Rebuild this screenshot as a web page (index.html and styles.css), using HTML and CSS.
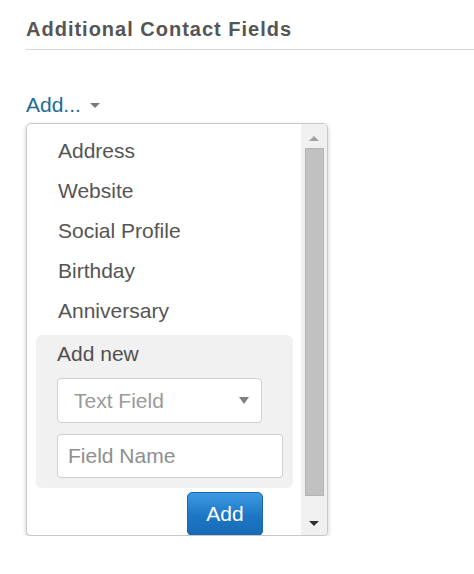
FILE: index.html
```html
<!DOCTYPE html>
<html>
<head>
<meta charset="utf-8">
<link rel="stylesheet" href="styles.css">
</head>
<body>
<div class="page">
  <h2 class="section-title">Additional Contact Fields</h2>
  <a class="add-toggle" href="#">Add... <span class="caret"></span></a>
  <div class="dropdown">
    <div class="dropdown-content">
      <ul class="field-list">
        <li>Address</li>
        <li>Website</li>
        <li>Social Profile</li>
        <li>Birthday</li>
        <li>Anniversary</li>
      </ul>
      <div class="add-new">
        <div class="add-new-label">Add new</div>
        <div class="select-box">
          <span class="select-text">Text Field</span>
          <span class="select-caret"></span>
        </div>
        <div class="text-input">Field Name</div>
      </div>
      <div class="button-row">
        <button class="btn-add">Add</button>
      </div>
    </div>
    <div class="scrollbar">
      <div class="sb-btn sb-up"><span class="arrow-up"></span></div>
      <div class="sb-track"><div class="sb-thumb"></div></div>
      <div class="sb-btn sb-down"><span class="arrow-down"></span></div>
    </div>
  </div>
</div>
</body>
</html>
```

FILE: styles.css
```css
* { box-sizing: border-box; }

html, body {
  margin: 0;
  padding: 0;
  background: #ffffff;
}

body {
  font-family: "Liberation Sans", Arial, sans-serif;
  color: #555555;
}

.page {
  padding-left: 26px;
  padding-top: 17px;
}

.section-title {
  margin: 0;
  font-size: 20px;
  line-height: 24px;
  font-weight: bold;
  letter-spacing: 1px;
  color: #555555;
  padding-bottom: 8px;
  border-bottom: 1px solid #d6d6d6;
}

.add-toggle {
  display: inline-flex;
  align-items: center;
  margin-top: 43px;
  font-size: 21px;
  line-height: 24px;
  color: #236a9a;
  text-decoration: none;
}

.caret {
  display: inline-block;
  width: 0;
  height: 0;
  margin-left: 9px;
  margin-top: 1px;
  border-left: 5px solid transparent;
  border-right: 5px solid transparent;
  border-top: 5px solid #7a7a7a;
}

.dropdown {
  margin-top: 6px;
  width: 302px;
  height: 413px;
  border: 1px solid #c8c8c8;
  border-radius: 5px;
  box-shadow: 0 2px 4px rgba(0, 0, 0, 0.22);
  display: flex;
  overflow: hidden;
  background: #ffffff;
}

.dropdown-content {
  flex: 1;
  overflow: hidden;
  padding-top: 7px;
}

.field-list {
  list-style: none;
  margin: 0;
  padding: 0 0 0 31px;
}

.field-list li {
  font-size: 21px;
  line-height: 40px;
  color: #555555;
}

.add-new {
  margin: 4px 0 0 9px;
  width: 257px;
  height: 153px;
  background: #f1f1f1;
  border-radius: 6px;
  padding: 7px 0 0 21px;
}

.add-new-label {
  font-size: 21px;
  line-height: 24px;
  color: #505050;
}

.select-box {
  margin-top: 12px;
  width: 205px;
  height: 45px;
  background: #ffffff;
  border: 1px solid #d0d0d0;
  border-radius: 4px;
  display: flex;
  align-items: center;
  justify-content: space-between;
  padding: 0 12px 0 16px;
}

.select-text {
  font-size: 21px;
  color: #9a9a9a;
}

.select-caret {
  width: 0;
  height: 0;
  border-left: 5px solid transparent;
  border-right: 5px solid transparent;
  border-top: 7px solid #808080;
}

.text-input {
  margin-top: 11px;
  width: 226px;
  height: 44px;
  background: #ffffff;
  border: 1px solid #d0d0d0;
  border-radius: 4px;
  display: flex;
  align-items: center;
  padding-left: 10px;
  font-size: 21px;
  color: #8e8e8e;
}

.button-row {
  padding: 4px 0 0 160px;
}

.btn-add {
  width: 76px;
  height: 44px;
  border: 1px solid #1a67a8;
  border-radius: 5px;
  background: linear-gradient(to bottom, #3d9ae0 0%, #1d76c4 55%, #176bb6 100%);
  color: #ffffff;
  font-family: "Liberation Sans", Arial, sans-serif;
  font-size: 21px;
  padding: 0;
  display: block;
}

.scrollbar {
  width: 26px;
  background: #f0f0f0;
  display: flex;
  flex-direction: column;
  align-items: center;
}

.sb-btn {
  width: 100%;
  display: flex;
  align-items: center;
  justify-content: center;
}

.sb-up {
  height: 24px;
}

.sb-down {
  height: 26px;
  margin-top: 13px;
}

.sb-track {
  flex: 1;
  width: 100%;
  display: flex;
  justify-content: center;
  padding-left: 1px;
}

.sb-thumb {
  width: 19px;
  height: 348px;
  background: #c1c1c1;
  border: 1px solid #b4b4b4;
}

.arrow-up {
  width: 0;
  height: 0;
  margin-top: 4px;
  border-left: 5px solid transparent;
  border-right: 5px solid transparent;
  border-bottom: 5px solid #a0a0a0;
}

.arrow-down {
  width: 0;
  height: 0;
  margin-top: 2px;
  border-left: 5px solid transparent;
  border-right: 5px solid transparent;
  border-top: 5px solid #303030;
}
```
